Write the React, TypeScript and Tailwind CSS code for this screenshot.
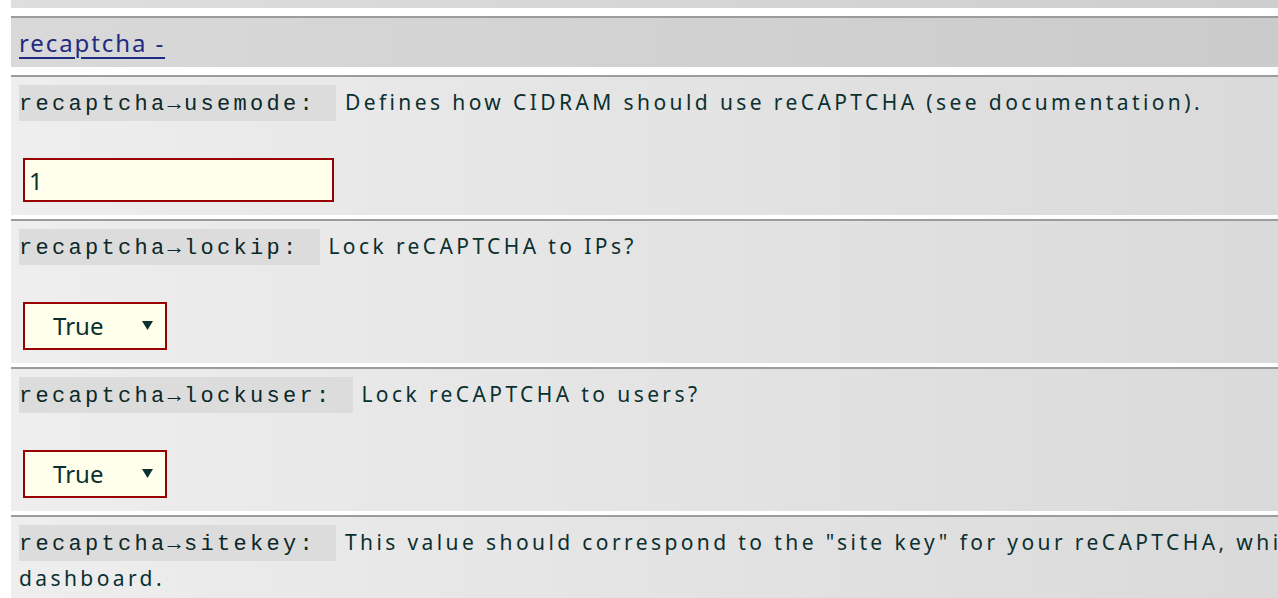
import React from 'react';

const rows = [
  {
    key: 'recaptcha→usemode:',
    desc: 'Defines how CIDRAM should use reCAPTCHA (see documentation).',
    control: 'input' as const,
    value: '1',
  },
  {
    key: 'recaptcha→lockip:',
    desc: 'Lock reCAPTCHA to IPs?',
    control: 'select' as const,
    value: 'True',
  },
  {
    key: 'recaptcha→lockuser:',
    desc: 'Lock reCAPTCHA to users?',
    control: 'select' as const,
    value: 'True',
  },
  {
    key: 'recaptcha→sitekey:',
    desc: 'This value should correspond to the "site key" for your reCAPTCHA, which can be found within the reCAPTCHA dashboard.',
    control: null,
    value: '',
  },
];

export default function App() {
  return (
    <div className="w-[1278px] h-[598px] overflow-hidden bg-white font-['Noto_Sans',sans-serif] text-[#0b3030]">
      <div className="w-[1920px] pl-[11px]">
        {/* tail of previous section */}
        <div className="h-[8px] bg-gradient-to-r from-[#dedede] to-[#c6c6c6]" />

        {/* section header */}
        <div className="mt-[8px] border-t-2 border-[#9c9c9c] h-[51px] bg-gradient-to-r from-[#d9d9d9] to-[#c4c4c4] pl-[8px] flex items-center">
          <a href="#" className="text-[24px] tracking-[1.9px] text-[#1f2a80] underline underline-offset-[5px] decoration-[2px]">
            recaptcha -
          </a>
        </div>

        <div className="mt-[8px] flex flex-col gap-[4px]">
          {rows.map((row) => (
            <div
              key={row.key}
              className="border-t-2 border-[#9c9c9c] bg-gradient-to-r from-[#eeeeee] to-[#d0d0d0] pl-[8px] pt-[8px] pb-[13px]"
            >
              <div className="text-[21px] leading-[35px] tracking-[3.4px]">
                <span className="inline-block h-[36px] pt-[3px] leading-[33px] align-top bg-[#dcdcdc] pr-[20px] font-['Liberation_Mono',monospace] text-[22px] tracking-[3.3px] text-[#0b2828]">
                  {row.key}
                </span>{' '}
                {row.desc}
              </div>

              {row.control === 'input' && (
                <div className="mt-[37px] pl-[4px]">
                  <input
                    readOnly
                    value={row.value}
                    className="w-[311px] h-[44px] border-2 border-[#990000] bg-[#ffffec] px-[4px] text-[24px] text-[#0b3030] outline-none font-['Noto_Sans',sans-serif]"
                  />
                </div>
              )}

              {row.control === 'select' && (
                <div className="mt-[37px] pl-[4px]">
                  <div className="w-[144px] h-[48px] border-2 border-[#990000] bg-[#ffffec] flex items-center pl-[28px] pr-[12px] justify-between">
                    <span className="text-[24px] text-[#0b3030]">{row.value}</span>
                    <svg width="11" height="9" viewBox="0 0 11 9" className="mb-[2px]">
                      <path d="M0 0H11L5.5 9Z" fill="#0b3030" />
                    </svg>
                  </div>
                </div>
              )}
            </div>
          ))}
        </div>
      </div>
    </div>
  );
}
